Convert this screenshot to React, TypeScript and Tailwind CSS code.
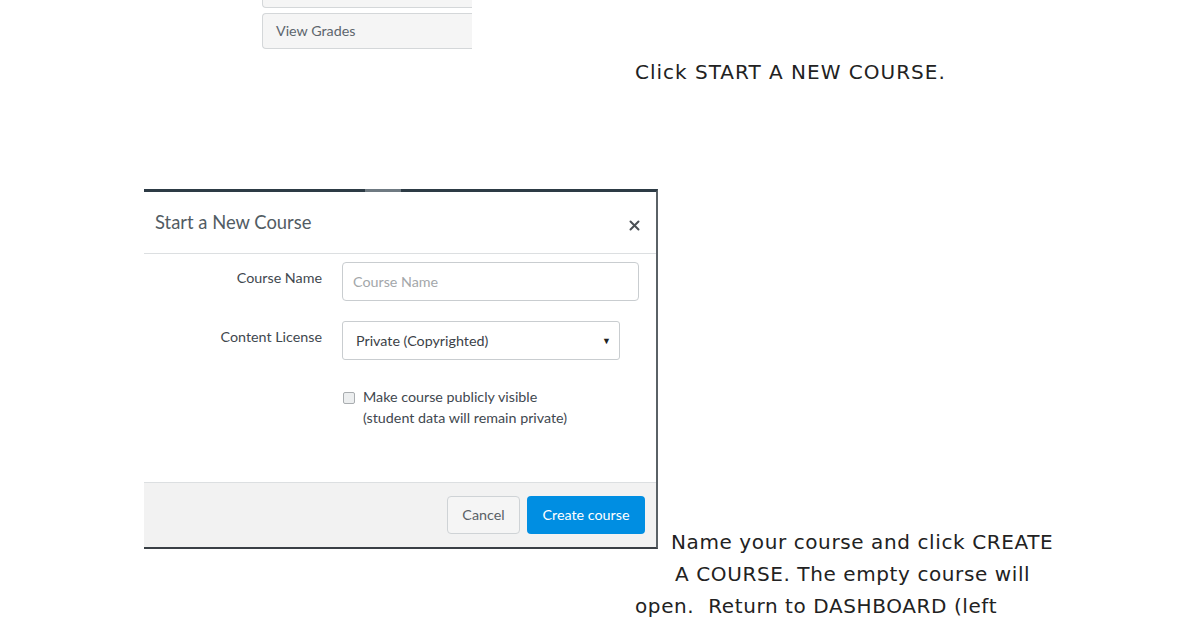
import React from "react";

export default function App() {
  return (
    <div className="relative w-[1200px] h-[630px] overflow-hidden bg-white">
      {/* Top snippet (cropped course menu) */}
      <div className="absolute left-[262px] top-[-30px] w-[210px] flex flex-col gap-[5px] font-['Lato',sans-serif]">
        <div className="h-[38px] bg-[#f5f5f5] border-l border-b border-t border-[#d4d7d9] rounded-l-[4px]" />
        <div className="h-[36px] bg-[#f5f5f5] border-l border-b border-t border-[#d4d7d9] rounded-l-[4px] flex items-center pl-[13px] text-[14.3px] text-[#5d666d]">
          View Grades
        </div>
      </div>

      {/* Instruction 1 */}
      <div className="absolute left-[635px] top-[58px] text-[20px] leading-[28px] text-[#222] font-['DejaVu_Sans',sans-serif] tracking-[1px]">
        Click START A NEW COURSE.
      </div>

      {/* Dialog screenshot */}
      <div className="absolute left-[144px] top-[189px] w-[514px] h-[360px] flex flex-col border-t-[3px] border-t-[#2d3b45] border-r-2 border-r-[#5a6166] border-b-2 border-b-[#3a4046] bg-white font-['Lato',sans-serif]">
        <div className="absolute left-[221px] top-[-3px] w-[36px] h-[3px] bg-[#6f7a82]" />
        {/* header */}
        <div className="h-[62px] shrink-0 flex items-center justify-between pl-[11px] pr-[16px] border-b border-[#dcdfe1]">
          <span className="text-[18.4px] text-[#525c63]">Start a New Course</span>
          <svg width="11" height="11" viewBox="0 0 11 11" className="mt-[5px]">
            <path d="M1.5 1.5 L9.5 9.5 M9.5 1.5 L1.5 9.5" stroke="#4a4f54" strokeWidth="2" strokeLinecap="round" />
          </svg>
        </div>
        {/* body */}
        <div className="flex-1 flex flex-col pt-[8px]">
          <div className="flex items-start">
            <div className="w-[178px] text-right text-[14.3px] text-[#3f484f] pt-[5px]">Course Name</div>
            <div className="ml-[20px] w-[297px] h-[39px] border border-[#c9cdd0] rounded-[4px] flex items-center pl-[10px] text-[14.3px] text-[#a3a7aa]">
              Course Name
            </div>
          </div>
          <div className="flex items-start mt-[20px]">
            <div className="w-[178px] text-right text-[14.3px] text-[#3f484f] pt-[5px]">Content License</div>
            <div className="ml-[20px] w-[278px] h-[39px] border border-[#c9cdd0] rounded-[3px] flex items-center justify-between pl-[13px] pr-[8px] text-[14.3px] text-[#3b4248]">
              <span>Private (Copyrighted)</span>
              <span className="text-[9px] text-[#222]">▼</span>
            </div>
          </div>
          <div className="flex items-start mt-[29px] pl-[199px]">
            <div className="w-[12px] h-[12px] mt-[3px] border border-[#a9adb0] rounded-[2px] bg-[#eceeef]" />
            <div className="ml-[8px] text-[14.3px] leading-[21px] text-[#3f484f] -mt-[3px]">
              <div>Make course publicly visible</div>
              <div>(student data will remain private)</div>
            </div>
          </div>
        </div>
        {/* footer */}
        <div className="h-[65px] shrink-0 bg-[#f2f2f2] border-t border-[#dcdfe1] flex items-center justify-end gap-[7px] pr-[11px]">
          <div className="w-[73px] h-[38px] rounded-[4px] bg-[#f5f5f5] border border-[#cfd3d6] flex items-center justify-center text-[14.3px] text-[#5a6166]">
            Cancel
          </div>
          <div className="w-[118px] h-[38px] rounded-[4px] bg-[#008ee2] flex items-center justify-center text-[14.3px] text-white">
            Create course
          </div>
        </div>
      </div>

      {/* Instruction 2 */}
      <div className="absolute left-[635px] top-[526px] text-[20px] leading-[32px] text-[#222] font-['DejaVu_Sans',sans-serif] tracking-[0.6px]">
        <div className="pl-[36px]">Name your course and click CREATE</div>
        <div className="pl-[40px]">A COURSE. The empty course will</div>
        <div>open.&nbsp; Return to DASHBOARD (left</div>
      </div>
    </div>
  );
}
